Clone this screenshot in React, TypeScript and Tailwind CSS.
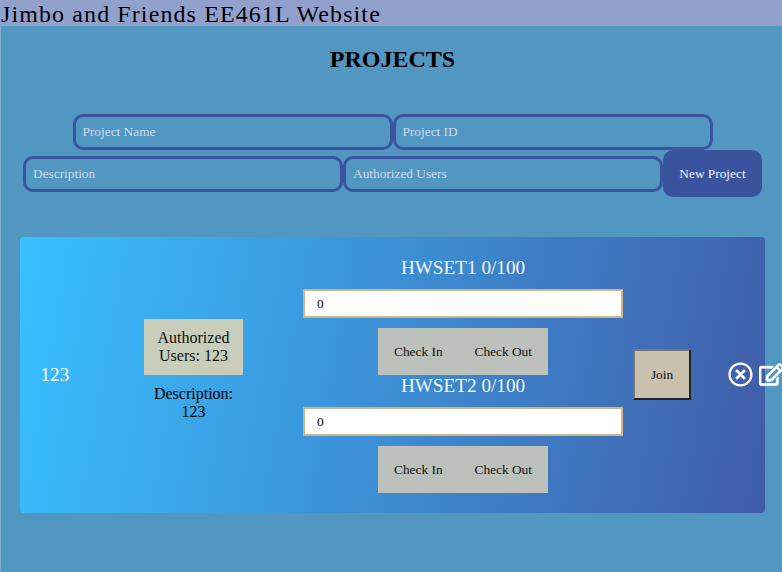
import { FaRegEdit, FaRegTimesCircle } from 'react-icons/fa';

function ProjectInput({ placeholder }: { placeholder: string }) {
  return (
    <input
      type="text"
      placeholder={placeholder}
      className="w-[320px] h-[36px] shrink-0 rounded-[10px] border-[3px] border-[#3b54a0] bg-transparent px-[7px] text-[13.33px] text-white placeholder-[#cfdbe6] outline-none"
    />
  );
}

function HardwareSet({ name }: { name: string }) {
  return (
    <div className="flex flex-col items-center">
      <h3 className="h-[21px] mb-[11px] text-[19.2px] leading-[21px] text-[#f2f6fb]">{name} 0/100</h3>
      <input
        type="text"
        defaultValue="0"
        className="w-[320px] h-[29px] border-2 border-[#cdb586] bg-white pl-[12px] text-[13.33px] text-black outline-none"
      />
      <div className="mt-[10px] flex h-[47px] bg-[#bcc1bc] text-[13.33px] text-[#111]">
        <button className="px-4">Check In</button>
        <button className="px-4">Check Out</button>
      </div>
    </div>
  );
}

export default function App() {
  return (
    <div className="min-h-screen w-[782px] overflow-hidden bg-[#5296c2] font-['Liberation_Serif',serif] text-black">
      <div className="h-[26px] bg-[#92a1cb] pl-[1px] text-[24px] leading-[28px] tracking-[1.1px] whitespace-nowrap">Jimbo and Friends EE461L Website</div>

      <div className="border-l border-[#7fa8cc] pl-[2px] pt-[20px] pb-[59px]">
        <h1 className="text-center text-[24px] leading-[27px] font-bold">PROJECTS</h1>

        <div className="mt-[41px] flex justify-center">
          <ProjectInput placeholder="Project Name" />
          <ProjectInput placeholder="Project ID" />
        </div>
        <div className="flex items-center justify-center">
          <ProjectInput placeholder="Description" />
          <ProjectInput placeholder="Authorized Users" />
          <button className="h-[47px] w-[99px] shrink-0 rounded-[10px] bg-[#3a539e] text-[13.33px] text-[#f2f4f8]">New Project</button>
        </div>

        <div className="mt-[40px] ml-[17px] flex h-[276px] w-[745px] items-center rounded-[4px] bg-linear-[100deg,#38c0ff,#415ca8] pl-[20.5px]">
          <div className="w-[28.5px] shrink-0 text-[19.2px] text-white">123</div>

          <div className="ml-[75px] w-[99px] shrink-0 text-center text-[16px] leading-[18px]">
            <div className="flex h-[56px] items-center justify-center bg-[#c9cdbb] text-[#111]">
              <span>
                Authorized
                <br />
                Users: 123
              </span>
            </div>
            <p className="my-[10px]">
              Description:
              <br />
              123
            </p>
          </div>

          <div className="ml-[60px] shrink-0">
            <HardwareSet name="HWSET1" />
            <HardwareSet name="HWSET2" />
          </div>

          <button className="ml-[10px] mb-[1px] h-[51px] w-[58px] shrink-0 border-2 border-t-[#767676] border-l-[#767676] border-r-[#222] border-b-[#222] bg-[#c9c0ae] text-[13.33px] text-[#111]">
            Join
          </button>

          <FaRegTimesCircle className="ml-[37px] mb-[1px] shrink-0 text-white" size={25} />
          <FaRegEdit className="ml-[6px] mb-[1px] shrink-0 text-white" size={25} stroke="currentColor" strokeWidth={16} />
        </div>
      </div>
    </div>
  );
}
